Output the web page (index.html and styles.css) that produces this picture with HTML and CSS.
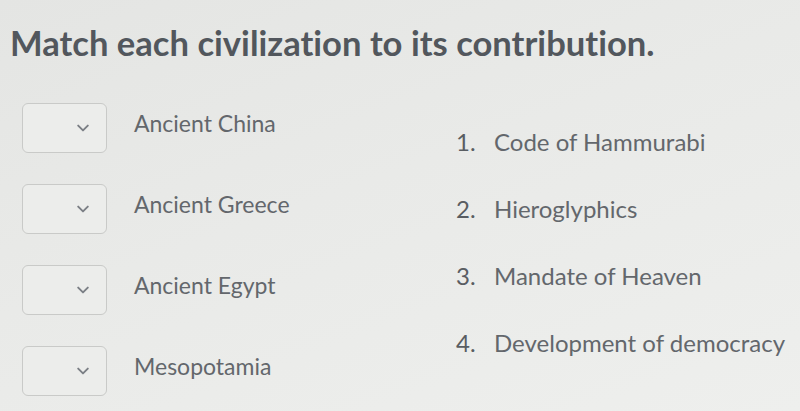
FILE: index.html
```html
<!DOCTYPE html>
<html lang="en">
<head>
<meta charset="utf-8">
<title>Matching question</title>
<link rel="stylesheet" href="styles.css">
</head>
<body>
<main class="question">
  <h1 class="question-title">Match each civilization to its contribution.</h1>
  <div class="match">
    <div class="prompts">
      <div class="prompt">
        <div class="select"><svg class="chevron" viewBox="0 0 10 6"><path d="M1 1l4 4 4-4"/></svg></div>
        <span class="prompt-label">Ancient China</span>
      </div>
      <div class="prompt">
        <div class="select"><svg class="chevron" viewBox="0 0 10 6"><path d="M1 1l4 4 4-4"/></svg></div>
        <span class="prompt-label">Ancient Greece</span>
      </div>
      <div class="prompt">
        <div class="select"><svg class="chevron" viewBox="0 0 10 6"><path d="M1 1l4 4 4-4"/></svg></div>
        <span class="prompt-label">Ancient Egypt</span>
      </div>
      <div class="prompt">
        <div class="select"><svg class="chevron" viewBox="0 0 10 6"><path d="M1 1l4 4 4-4"/></svg></div>
        <span class="prompt-label">Mesopotamia</span>
      </div>
    </div>
    <ol class="answers">
      <li class="answer"><span class="answer-num">1.</span><span>Code of Hammurabi</span></li>
      <li class="answer"><span class="answer-num">2.</span><span>Hieroglyphics</span></li>
      <li class="answer"><span class="answer-num">3.</span><span>Mandate of Heaven</span></li>
      <li class="answer"><span class="answer-num">4.</span><span>Development of democracy</span></li>
    </ol>
  </div>
</main>
</body>
</html>
```
FILE: styles.css
```css
html, body {
  margin: 0;
  height: 100%;
}

body {
  background: linear-gradient(160deg, #e4e5e3 0%, #e9eae8 45%, #eeefed 100%);
  font-family: Lato, "Open Sans", sans-serif;
  font-variant-ligatures: none;
  color: #5b5f65;
  overflow: hidden;
}

.question {
  padding: 21px 0 0 10px;
}

.question-title {
  margin: 0;
  font-size: 34.6px;
  font-weight: 700;
  line-height: 44px;
  color: #52575d;
}

.match {
  display: flex;
  margin-top: 38px;
}

.prompts {
  width: 434px;
  display: flex;
  flex-direction: column;
  gap: 31px;
  padding-left: 12px;
  flex-shrink: 0;
}

.prompt {
  display: flex;
  align-items: center;
  gap: 27px;
  height: 50px;
}

.select {
  box-sizing: border-box;
  width: 85px;
  height: 50px;
  border: 1.5px solid #c9cac8;
  border-radius: 6px;
  background: #ecedeb;
  display: flex;
  align-items: center;
  justify-content: flex-end;
  padding-right: 17px;
}

.chevron {
  width: 12px;
  height: 8px;
  fill: none;
  stroke: #7b7f85;
  stroke-width: 1.6;
  stroke-linecap: round;
  stroke-linejoin: round;
}

.prompt-label {
  font-size: 23px;
  color: #63676c;
  margin-top: -10px;
}

.answers {
  list-style: none;
  margin: 0;
  padding: 25px 0 0 0;
  display: flex;
  flex-direction: column;
  gap: 39px;
}

.answer {
  display: flex;
  font-size: 24px;
  line-height: 28px;
  color: #63676c;
  white-space: nowrap;
}

.answer-num {
  width: 38px;
  color: #595d62;
}
```
